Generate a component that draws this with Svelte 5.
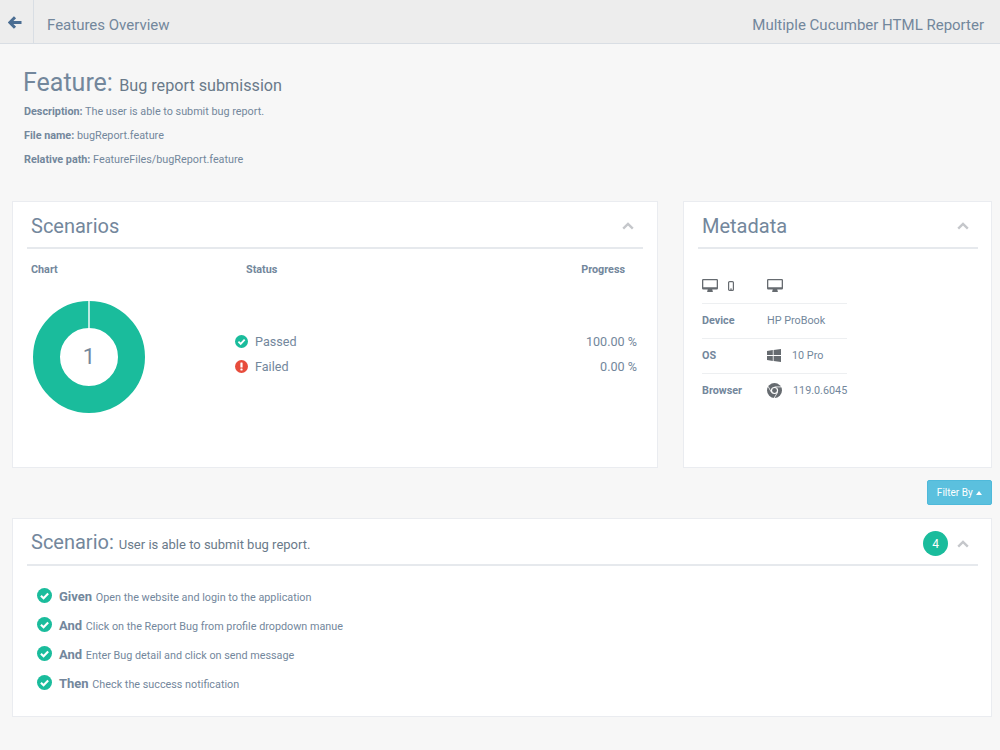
<script>
  const steps = [
    { key: 'Given', text: 'Open the website and login to the application' },
    { key: 'And', text: 'Click on the Report Bug from profile dropdown manue' },
    { key: 'And', text: 'Enter Bug detail and click on send message' },
    { key: 'Then', text: 'Check the success notification' }
  ];
</script>

{#snippet check(size)}
  <svg class="status" width={size} height={size} viewBox="0 0 16 16">
    <circle cx="8" cy="8" r="8" fill="#1abc9c" />
    <path d="M4.2 8.2 L7 10.9 L11.9 5.8" fill="none" stroke="#fff" stroke-width="2.3" />
  </svg>
{/snippet}

{#snippet chevron()}
  <svg class="chevron" width="12" height="8" viewBox="0 0 12 8">
    <path d="M1.2 6.6 L6 1.9 L10.8 6.6" fill="none" stroke="#c5c7cb" stroke-width="2.4" />
  </svg>
{/snippet}

{#snippet monitor()}
  <svg width="16" height="13" viewBox="0 0 16 13">
    <path d="M1.2 0H14.8A1.2 1.2 0 0 1 16 1.2V9.3A1.2 1.2 0 0 1 14.8 10.5H10.2L10.8 12.2V13H5.2V12.2L5.8 10.5H1.2A1.2 1.2 0 0 1 0 9.3V1.2A1.2 1.2 0 0 1 1.2 0ZM1.3 1.3V8.2H14.7V1.3Z" fill="#666b70" fill-rule="evenodd" />
  </svg>
{/snippet}

<header class="topbar">
  <div class="back">
    <svg width="14" height="13" viewBox="0 0 14 13">
      <path d="M7 1.2 L1.9 6.5 L7 11.8 M2.4 6.5 H13.5" fill="none" stroke="#4a6d92" stroke-width="3" />
    </svg>
  </div>
  <div class="crumb">Features Overview</div>
  <div class="brand">Multiple Cucumber HTML Reporter</div>
</header>

<main class="page">
  <section class="intro">
    <h2><span class="big">Feature:</span> <small>Bug report submission</small></h2>
    <p><strong>Description:</strong> The user is able to submit bug report.</p>
    <p><strong>File name:</strong> bugReport.feature</p>
    <p><strong>Relative path:</strong> FeatureFiles/bugReport.feature</p>
  </section>

  <div class="columns">
    <section class="panel scenarios">
      <div class="panel-title">
        <h3>Scenarios</h3>
        {@render chevron()}
      </div>
      <div class="chart-grid">
        <div class="col-chart">
          <div class="th">Chart</div>
          <div class="donut-wrap">
            <svg width="112" height="112" viewBox="0 0 112 112">
              <circle cx="56" cy="56" r="42.5" fill="none" stroke="#1abc9c" stroke-width="27" />
              <rect x="55.3" y="0" width="1.4" height="28" fill="#fff" />
              <text x="56" y="63" text-anchor="middle" class="donut-num">1</text>
            </svg>
          </div>
        </div>
        <div class="col-status">
          <div class="th-row">
            <span class="th status-th">Status</span>
            <span class="th">Progress</span>
          </div>
          <div class="status-list">
            <div class="status-row">
              {@render check(13)}
              <span class="label">Passed</span>
              <span class="pct">100.00 %</span>
            </div>
            <div class="status-row">
              <svg class="status" width="13" height="13" viewBox="0 0 13 13">
                <circle cx="6.5" cy="6.5" r="6.5" fill="#e74c3c" />
                <rect x="5.4" y="2.6" width="2.2" height="5" rx="0.4" fill="#fff" />
                <rect x="5.4" y="8.5" width="2.2" height="2" rx="0.4" fill="#fff" />
              </svg>
              <span class="label">Failed</span>
              <span class="pct">0.00 %</span>
            </div>
          </div>
        </div>
      </div>
    </section>

    <section class="panel metadata">
      <div class="panel-title">
        <h3>Metadata</h3>
        {@render chevron()}
      </div>
      <table>
        <tbody>
          <tr class="icons">
            <td>
              <span class="icon-pair">
                {@render monitor()}
                <svg width="6" height="10" viewBox="0 0 6 10">
                  <rect x="0.6" y="0.6" width="4.8" height="8.8" rx="1" fill="none" stroke="#666b70" stroke-width="1.2" />
                  <rect x="2" y="7.6" width="2" height="1" fill="#666b70" />
                </svg>
              </span>
            </td>
            <td>{@render monitor()}</td>
          </tr>
          <tr>
            <th>Device</th>
            <td>HP ProBook</td>
          </tr>
          <tr>
            <th>OS</th>
            <td>
              <span class="with-icon os">
                <svg width="14" height="13" viewBox="0 0 14 13">
                  <path d="M0 2 L5.8 1.1 V6.1 H0Z M6.6 1 L14 0 V6.1 H6.6Z M0 6.9 H5.8 V11.9 L0 11Z M6.6 6.9 H14 V13 L6.6 12Z" fill="#666b70" />
                </svg>
                10 Pro
              </span>
            </td>
          </tr>
          <tr>
            <th>Browser</th>
            <td>
              <span class="with-icon browser">
                <svg width="15" height="15" viewBox="0 0 15 15">
                  <circle cx="7.5" cy="7.5" r="7.5" fill="#666b70" />
                  <circle cx="7.5" cy="7.5" r="3.6" fill="#fff" />
                  <circle cx="7.5" cy="7.5" r="2.4" fill="#666b70" />
                  <path d="M7.5 3.9 H14 M10.6 9.3 L7.2 15 M4.4 9.3 L1.2 3.6" stroke="#fff" stroke-width="0.8" fill="none" />
                </svg>
                119.0.6045
              </span>
            </td>
          </tr>
        </tbody>
      </table>
    </section>
  </div>

  <div class="filter-row">
    <button class="filter">Filter By <span class="caret"></span></button>
  </div>

  <section class="panel scenario">
    <div class="panel-title">
      <h3><span class="big-s">Scenario:</span> <small>User is able to submit bug report.</small></h3>
      <span class="count">4</span>
      {@render chevron()}
    </div>
    <ul class="steps">
      {#each steps as step}
        <li>
          {@render check(15)}
          <strong>{step.key}</strong>
          <span>{step.text}</span>
        </li>
      {/each}
    </ul>
  </section>
</main>

<style>
  :global(body) {
    background: #f7f7f7;
    color: #73879c;
    font-family: Roboto, "Liberation Sans", sans-serif;
    font-size: 10.8px;
  }

  .topbar {
    display: flex;
    align-items: center;
    height: 43px;
    background: #ededed;
    border-bottom: 1px solid #d9dee4;
  }

  .back {
    display: flex;
    align-items: center;
    width: 34px;
    height: 43px;
    padding: 1px 0 0 8px;
    box-sizing: border-box;
    border-right: 1px solid #d9dee4;
  }

  .crumb {
    margin-left: 13px;
    padding-top: 7px;
    font-size: 15px;
    color: #73879c;
  }

  .brand {
    margin-left: auto;
    margin-right: 16px;
    padding-top: 7px;
    font-size: 15px;
    color: #73879c;
  }

  .page {
    padding: 0 8px 0 12px;
  }

  .intro {
    height: 157px;
    padding: 23px 0 0 11px;
    box-sizing: border-box;
  }

  .intro h2 {
    margin: 0 0 5px;
    font-weight: 400;
    font-size: 25px;
    line-height: 32px;
    height: 32px;
  }

  .intro h2 small {
    font-size: 16.2px;
    color: #6a7a8a;
  }

  .intro p {
    margin: 0;
    padding-left: 1px;
    line-height: 15px;
    height: 24px;
  }

  strong {
    font-weight: 700;
  }

  .columns {
    display: flex;
    justify-content: space-between;
  }

  .panel {
    background: #fff;
    border: 1px solid #eaecf0;
    box-sizing: border-box;
    padding: 0 14px;
  }

  .scenarios {
    width: 646px;
    height: 267px;
  }

  .metadata {
    width: 309px;
    height: 267px;
  }

  .panel-title {
    display: flex;
    align-items: center;
    height: 43px;
    padding: 2px 9px 0 4px;
    border-bottom: 2px solid #e6e9ed;
  }

  .metadata .panel-title,
  .scenario .panel-title {
    margin-right: -1px;
  }

  .scenario .panel-title {
    height: 44px;
    padding-top: 1px;
  }

  .scenario .panel-title :global(.chevron),
  .count {
    margin-top: 3px;
  }

  .panel-title h3 {
    margin: 0;
    flex: 1;
    font-weight: 400;
    font-size: 20px;
    color: #73879c;
  }

  .chart-grid {
    display: flex;
    padding: 14px 6px 0 4px;
  }

  .th {
    font-weight: 700;
    font-size: 10.8px;
    line-height: 13px;
  }

  .col-chart {
    width: 204px;
  }

  .donut-wrap {
    margin: 25px 0 0 2px;
    height: 112px;
  }

  .donut-num {
    font-size: 22px;
    fill: #73879c;
  }

  .col-status {
    flex: 1;
  }

  .th-row {
    display: flex;
    justify-content: space-between;
    padding: 0 12px 0 11px;
  }

  .status-list {
    margin-top: 53px;
  }

  .status-row {
    display: flex;
    align-items: center;
    height: 25px;
    font-size: 12.6px;
  }

  .status-row .label {
    margin-left: 7px;
  }

  .status-row .pct {
    margin-left: auto;
  }

  table {
    border-collapse: collapse;
    margin: 20px 0 0 4px;
    font-size: 10.8px;
  }

  tr {
    border-top: 1px solid #edeff1;
    height: 35px;
  }

  tr.icons {
    border-top: 0;
    height: 34px;
  }

  th {
    text-align: left;
    font-weight: 700;
    width: 65px;
    padding: 0;
  }

  td {
    padding: 0;
    white-space: nowrap;
  }

  tr.icons td {
    vertical-align: middle;
  }

  tr.icons svg {
    display: block;
  }

  .icon-pair {
    display: flex;
    align-items: center;
    gap: 10px;
    width: 65px;
  }

  .with-icon {
    display: flex;
    align-items: center;
  }

  .with-icon.os svg {
    margin-right: 11px;
  }

  .with-icon.browser svg {
    margin-right: 11px;
  }

  .filter-row {
    display: flex;
    justify-content: flex-end;
    height: 50px;
    padding-top: 12px;
    box-sizing: border-box;
  }

  .filter {
    width: 65px;
    height: 25px;
    padding: 0;
    border: 1px solid #4fb9da;
    border-radius: 2px;
    background: #5bc0de;
    color: #fff;
    font-family: inherit;
    font-size: 10px;
  }

  .caret {
    display: inline-block;
    vertical-align: middle;
    margin-left: 1px;
    border-left: 3.5px solid transparent;
    border-right: 3.5px solid transparent;
    border-bottom: 4px solid #fff;
  }

  .scenario {
    height: 199px;
  }

  .big-s {
    font-size: 20px;
  }

  .scenario h3 small {
    font-size: 13px;
    color: #6a7a8a;
  }

  .count {
    display: flex;
    align-items: center;
    justify-content: center;
    width: 25px;
    height: 25px;
    margin-right: 9px;
    border-radius: 50%;
    background: #1abc9c;
    color: #fff;
    font-size: 12px;
  }

  .steps {
    list-style: none;
    margin: 16px 0 0;
    padding: 0 0 0 9px;
  }

  .steps li {
    position: relative;
    height: 29px;
    padding-left: 23px;
    line-height: 29px;
    white-space: nowrap;
  }

  .steps li strong {
    font-size: 13px;
    margin-right: 1px;
  }

  .steps li .status {
    position: absolute;
    left: 1px;
    top: 6px;
  }
</style>
